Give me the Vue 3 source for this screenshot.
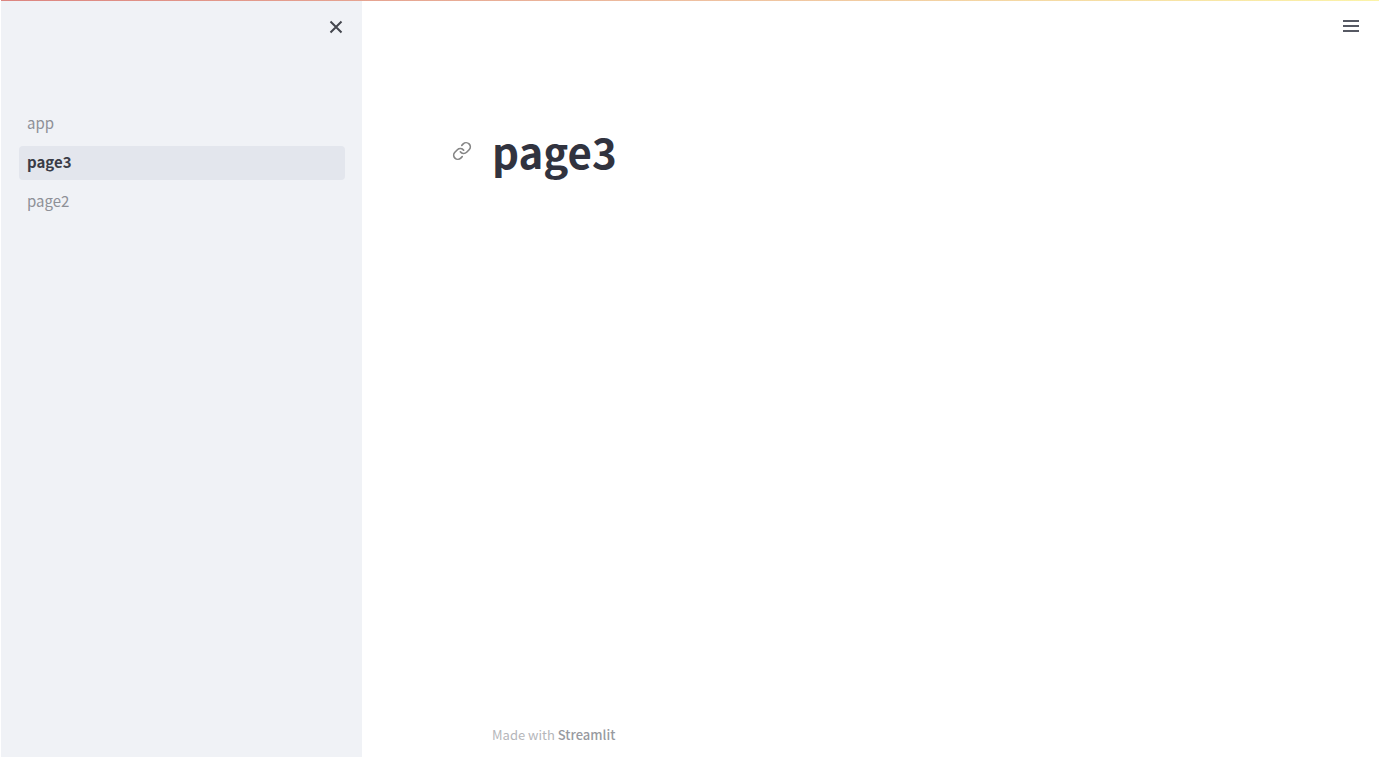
<script setup>
const pages = [
  { name: 'app', active: false },
  { name: 'page3', active: true },
  { name: 'page2', active: false },
]
</script>

<template>
  <div class="app">
    <div class="decoration"></div>
    <div class="shell">
      <aside class="sidebar">
        <div class="sidebar-top">
          <button class="icon-button" type="button" aria-label="Close sidebar">
            <svg width="14" height="14" viewBox="0 0 14 14">
              <path d="M1.5 1.5L12.5 12.5M12.5 1.5L1.5 12.5" fill="none" stroke="#44464e" stroke-width="2" />
            </svg>
          </button>
        </div>
        <nav aria-label="Pages">
          <a
            v-for="page in pages"
            :key="page.name"
            href="#"
            class="nav-link"
            :class="{ active: page.active }"
            :aria-current="page.active ? 'page' : undefined"
          >{{ page.name }}</a>
        </nav>
      </aside>
      <div class="main">
        <header class="toolbar">
          <button class="icon-button" type="button" aria-label="Main menu">
            <svg width="16" height="12" viewBox="0 0 16 12">
              <path d="M0 1h16M0 6h16M0 11h16" fill="none" stroke="#565963" stroke-width="2" />
            </svg>
          </button>
        </header>
        <main class="content">
          <div class="heading">
            <a class="anchor" href="#page3" aria-label="Link to heading">
              <svg width="20" height="20" viewBox="0 0 24 24" fill="none" stroke="#858585" stroke-width="2" stroke-linecap="round" stroke-linejoin="round">
                <path d="M10 13a5 5 0 0 0 7.54.54l3-3a5 5 0 0 0-7.07-7.07l-1.72 1.71" />
                <path d="M14 11a5 5 0 0 0-7.54-.54l-3 3a5 5 0 0 0 7.07 7.07l1.71-1.71" />
              </svg>
            </a>
            <h1 id="page3">page3</h1>
          </div>
        </main>
        <footer class="footer">Made with <a href="#">Streamlit</a></footer>
      </div>
    </div>
  </div>
</template>

<style>
body {
  background: #fff;
}
</style>

<style scoped>
.app {
  box-sizing: border-box;
  display: flex;
  flex-direction: column;
  height: 100vh;
  padding: 0 1px 7px;
  color: #31333f;
  font-family: "Noto Sans CJK JP", "Noto Sans", sans-serif;
}
.decoration {
  flex: none;
  height: 1px;
  background: linear-gradient(90deg, #dc8580, #eebfa0 50%, #fbf3a8);
}
.shell {
  display: flex;
  flex: 1;
  min-height: 0;
}
.sidebar {
  box-sizing: border-box;
  flex: none;
  width: 361px;
  padding: 0 17px 0 18px;
  background: #f0f2f6;
}
.sidebar-top {
  display: flex;
  justify-content: flex-end;
  align-items: center;
  height: 52px;
  margin-bottom: 54px;
}
.icon-button {
  display: flex;
  padding: 2px;
  border: 0;
  background: none;
  cursor: pointer;
}
.nav-link {
  display: block;
  margin-bottom: 5px;
  padding: 0 8px 2px;
  border-radius: 4px;
  color: #8e9097;
  font-size: 15px;
  line-height: 32px;
  text-decoration: none;
}
.nav-link.active {
  background: #e3e6ed;
  color: #3a3c47;
  font-weight: 700;
}
.main {
  display: flex;
  flex: 1;
  flex-direction: column;
}
.toolbar {
  display: flex;
  justify-content: flex-end;
  align-items: center;
  height: 50px;
  padding-right: 18px;
}
.content {
  flex: 1;
  padding: 73px 90px 0;
}
.heading {
  display: flex;
  align-items: center;
  gap: 20px;
}
.anchor {
  display: flex;
}
h1 {
  margin: 0;
  font-size: 42px;
  font-weight: 700;
  line-height: 53px;
}
.footer {
  padding: 0 130px 12px;
  color: #b5b6ba;
  font-size: 13px;
  line-height: 20px;
}
.footer a {
  color: #989aa0;
  font-weight: 500;
  text-decoration: none;
}
</style>
